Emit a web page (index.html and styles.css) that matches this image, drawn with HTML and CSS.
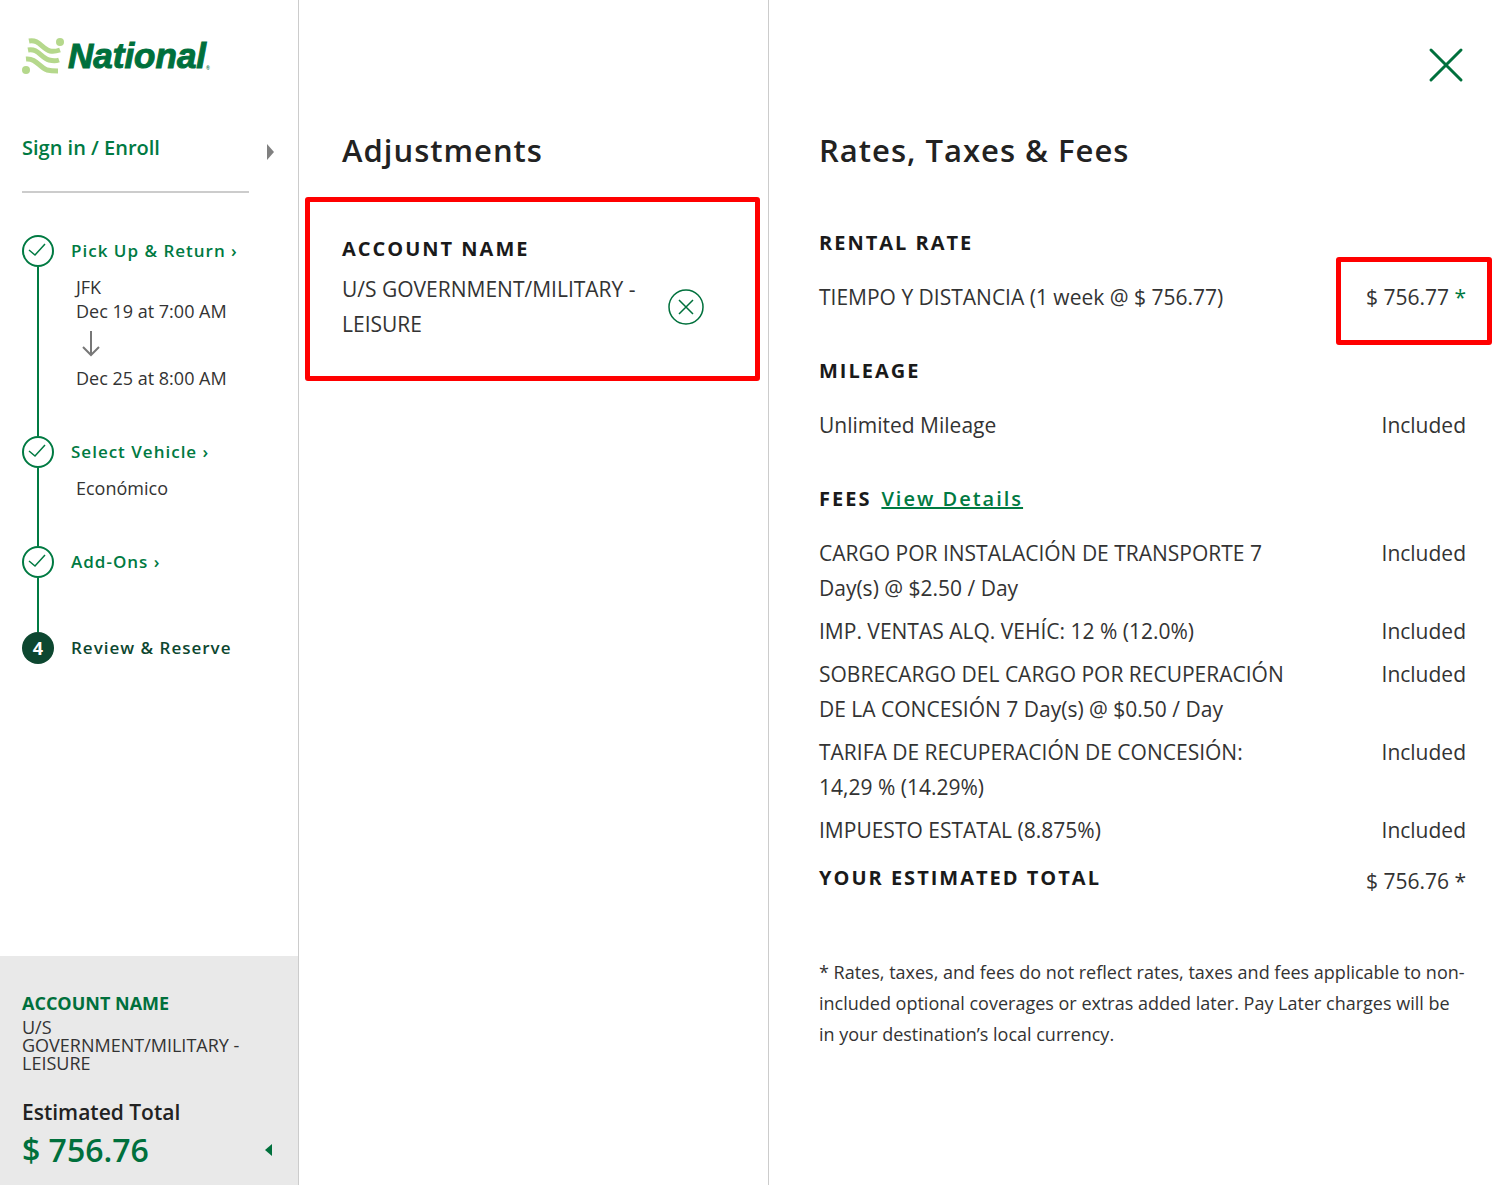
FILE: index.html
```html
<!DOCTYPE html>
<html lang="en">
<head>
    <meta charset="UTF-8">
    <meta name="viewport" content="width=device-width, initial-scale=1.0">
    <title>National - Review &amp; Reserve</title>
    <link rel="stylesheet" href="styles.css">
</head>
<body>
    <div class="layout">
        <aside class="sidebar">
            <a class="logo" href="#" aria-label="National">
                <svg class="logo-mark" viewBox="0 0 42 36" fill="none" stroke="#b5d88c" stroke-width="5">
                    <path d="M7 3C17 1 20 11 28 13C32 14 35 13 38 12"/>
                    <path d="M6 12C16 10 19 20 27 22C31 23 34 23 37 22"/>
                    <path d="M4 21C14 20 17 29 25 32C29 33 32 33 36 33"/>
                    <circle cx="38" cy="4" r="4" fill="#b5d88c" stroke="none"/>
                    <circle cx="4" cy="32" r="4" fill="#b5d88c" stroke="none"/>
                </svg>
                <span class="logo-text">National</span><span class="logo-dot">®</span>
            </a>

            <a class="sign-in" href="#">
                Sign in / Enroll
                <svg width="7" height="16" viewBox="0 0 7 16"><path d="M0 0L7 8L0 16Z" fill="#808080"/></svg>
            </a>
            <hr class="divider">

            <ol class="steps">
                <li class="step">
                    <div class="marker">
                        <svg class="check" viewBox="0 0 32 32"><circle cx="16" cy="16" r="15"/><path d="M7 15L13 20L23 9"/></svg>
                        <span class="line"></span>
                    </div>
                    <div class="step-body">
                        <a class="step-title" href="#">Pick Up &amp; Return ›</a>
                        <div class="details">
                            <p>JFK</p>
                            <p>Dec 19 at 7:00 AM</p>
                            <svg class="arrow" viewBox="0 0 18 26"><path d="M9 0V24M1 16L9 24L17 16"/></svg>
                            <p>Dec 25 at 8:00 AM</p>
                        </div>
                    </div>
                </li>
                <li class="step">
                    <div class="marker">
                        <svg class="check" viewBox="0 0 32 32"><circle cx="16" cy="16" r="15"/><path d="M7 15L13 20L23 9"/></svg>
                        <span class="line"></span>
                    </div>
                    <div class="step-body">
                        <a class="step-title" href="#">Select Vehicle ›</a>
                        <div class="details">
                            <p>Económico</p>
                        </div>
                    </div>
                </li>
                <li class="step">
                    <div class="marker">
                        <svg class="check" viewBox="0 0 32 32"><circle cx="16" cy="16" r="15"/><path d="M7 15L13 20L23 9"/></svg>
                        <span class="line"></span>
                    </div>
                    <div class="step-body">
                        <a class="step-title" href="#">Add-Ons ›</a>
                    </div>
                </li>
                <li class="step current">
                    <div class="marker"><span class="number">4</span></div>
                    <div class="step-body">
                        <span class="step-title">Review &amp; Reserve</span>
                    </div>
                </li>
            </ol>

            <div class="summary">
                <h3 class="summary-title">ACCOUNT NAME</h3>
                <p class="summary-account">U/S GOVERNMENT/MILITARY - LEISURE</p>
                <p class="summary-label">Estimated Total</p>
                <div class="summary-total">
                    <span>$ 756.76</span>
                    <button class="expand" aria-label="Show price details">
                        <svg width="7" height="12" viewBox="0 0 7 12"><path d="M7 0L0 6L7 12Z" fill="#00703c"/></svg>
                    </button>
                </div>
            </div>
        </aside>

        <section class="adjustments">
            <h2>Adjustments</h2>
            <div class="adjustment highlight-wrap">
                <h3>ACCOUNT NAME</h3>
                <div class="adjustment-row">
                    <p>U/S GOVERNMENT/MILITARY - LEISURE</p>
                    <button class="remove" aria-label="Remove account">
                        <svg width="36" height="36" viewBox="0 0 36 36"><circle cx="18" cy="18" r="17"/><path d="M11 11L25 25M25 11L11 25"/></svg>
                    </button>
                </div>
                <span class="highlight highlight-account"></span>
            </div>
        </section>

        <main class="rates">
            <button class="close" aria-label="Close">
                <svg width="40" height="40" viewBox="0 0 40 40"><path d="M5 5L35 35M35 5L5 35"/></svg>
            </button>
            <h2>Rates, Taxes &amp; Fees</h2>

            <h3>RENTAL RATE</h3>
            <table>
                <tr>
                    <td>TIEMPO Y DISTANCIA (1 week @ $ 756.77)</td>
                    <td class="amount"><span class="highlight-wrap">$ 756.77 <a href="#">*</a><span class="highlight highlight-rate"></span></span></td>
                </tr>
            </table>

            <h3>MILEAGE</h3>
            <table>
                <tr>
                    <td>Unlimited Mileage</td>
                    <td class="amount">Included</td>
                </tr>
            </table>

            <div class="fees-head">
                <h3>FEES</h3>
                <a href="#">View Details</a>
            </div>
            <table class="fees">
                <tr>
                    <td>CARGO POR INSTALACIÓN DE TRANSPORTE 7 Day(s) @ $2.50 / Day</td>
                    <td class="amount">Included</td>
                </tr>
                <tr>
                    <td>IMP. VENTAS ALQ. VEHÍC: 12 % (12.0%)</td>
                    <td class="amount">Included</td>
                </tr>
                <tr>
                    <td>SOBRECARGO DEL CARGO POR RECUPERACIÓN DE LA CONCESIÓN 7 Day(s) @ $0.50 / Day</td>
                    <td class="amount">Included</td>
                </tr>
                <tr>
                    <td>TARIFA DE RECUPERACIÓN DE CONCESIÓN: 14,29 % (14.29%)</td>
                    <td class="amount">Included</td>
                </tr>
                <tr>
                    <td>IMPUESTO ESTATAL (8.875%)</td>
                    <td class="amount">Included</td>
                </tr>
            </table>

            <div class="total">
                <h3>YOUR ESTIMATED TOTAL</h3>
                <span>$ 756.76 *</span>
            </div>

            <p class="footnote">* Rates, taxes, and fees do not reflect rates, taxes and fees applicable to non-included optional coverages or extras added later. Pay Later charges will be in your destination’s local currency.</p>
        </main>
    </div>
</body>
</html>
```
FILE: styles.css
```css
* {
    box-sizing: border-box;
}
body {
    font-family: 'Open Sans', 'Noto Sans', sans-serif;
    font-size: 21px;
    line-height: 35px;
    margin: 0;
    color: #333;
    background: white;
}
h2, h3, p {
    margin: 0;
}
h2 {
    color: #222;
    font-size: 31px;
    font-weight: 600;
    line-height: 40px;
    letter-spacing: 1px;
    margin-bottom: 55px;
}
h3 {
    color: #1a1a1a;
    font-size: 20px;
    font-weight: 700;
    line-height: 35px;
    letter-spacing: 2px;
}
a {
    color: #007a42;
    text-decoration: none;
}
button {
    display: block;
    padding: 0;
    border: none;
    background: none;
    cursor: pointer;
}
svg {
    display: block;
    flex: none;
}
.layout {
    display: grid;
    grid-template-columns: 299px 470px 1fr;
    min-height: 100vh;
}

/* sidebar */
.sidebar {
    display: flex;
    flex-direction: column;
    padding-top: 38px;
    border-right: 1px solid #ccc;
}
.logo {
    display: flex;
    height: 36px;
    margin: 0 22px 60px;
    color: #00703c;
    font-family: 'Liberation Sans', Arial, sans-serif;
    font-weight: bold;
    font-style: italic;
    line-height: 36px;
}
.logo-mark {
    width: 42px;
    height: 36px;
    margin-right: 4px;
}
.logo-text {
    font-size: 35px;
    -webkit-text-stroke: 1px #00703c;
}
.logo-dot {
    align-self: flex-end;
    font-size: 5px;
    line-height: 12px;
}
.sign-in {
    display: flex;
    justify-content: space-between;
    align-items: center;
    margin: 0 24px 29px 22px;
    font-size: 20px;
    font-weight: 600;
    line-height: 28px;
}
.sign-in svg {
    margin-top: 8px;
}
.divider {
    width: 227px;
    height: 2px;
    margin: 0 22px 42px;
    border: none;
    background: #ccc;
}
.steps {
    list-style: none;
    margin: 0 22px;
    padding: 0;
}
.step {
    display: flex;
    gap: 17px;
}
.marker {
    display: flex;
    flex-direction: column;
    align-items: center;
}
.check {
    width: 32px;
    height: 32px;
    fill: none;
    stroke: #007a42;
    stroke-width: 2;
}
.check path {
    stroke-width: 1.5;
}
.line {
    flex: 1;
    width: 2px;
    background: #007a42;
}
.number {
    width: 32px;
    height: 32px;
    border-radius: 50%;
    background: #0d4730;
    color: white;
    font-size: 18px;
    font-weight: 700;
    line-height: 32px;
    text-align: center;
}
.step-body {
    padding-bottom: 46px;
}
.step-title {
    display: block;
    margin-bottom: 8px;
    font-size: 17px;
    font-weight: 600;
    line-height: 32px;
    letter-spacing: 1px;
    white-space: nowrap;
}
.current .step-title {
    color: #0d4730;
}
.details {
    padding-left: 5px;
    font-size: 18px;
    line-height: 24px;
}
.arrow {
    width: 18px;
    height: 26px;
    margin: 8px 6px 9px;
    fill: none;
    stroke: #777;
    stroke-width: 2;
}
.summary {
    margin-top: auto;
    padding: 35px 26px 15px 22px;
    background: #e9e9e9;
}
.summary-title {
    margin-bottom: 3px;
    color: #00703c;
    font-size: 18px;
    line-height: 24px;
    letter-spacing: 0;
}
.summary-account {
    max-width: 227px;
    margin-bottom: 26px;
    font-size: 18px;
    line-height: 18px;
}
.summary-label {
    margin-bottom: 4px;
    color: #222;
    font-weight: 600;
    line-height: 28px;
}
.summary-total {
    display: flex;
    justify-content: space-between;
    align-items: center;
    color: #00703c;
    font-size: 32px;
    font-weight: 600;
    line-height: 40px;
}

/* adjustments column */
.adjustments {
    padding: 130px 64px 40px 43px;
    border-right: 1px solid #ccc;
}
.adjustments h2 {
    margin-bottom: 61px;
}
.adjustment h3 {
    margin-bottom: 6px;
}
.adjustment-row {
    display: flex;
    justify-content: space-between;
    align-items: center;
    gap: 32px;
}
.remove svg,
.close svg {
    fill: none;
    stroke: #00703c;
    stroke-width: 1.5;
}
.close svg {
    stroke-width: 3;
    stroke-linecap: round;
}

/* red frames over the content */
.highlight-wrap {
    position: relative;
}
.highlight {
    position: absolute;
    border: 5px solid #f00;
    border-radius: 3px;
    pointer-events: none;
}
.highlight-account {
    inset: -34px -56px -39px -37px;
}
.highlight-rate {
    inset: -26px -26px -34px -30px;
}

/* rates column */
.rates {
    padding: 45px 34px 40px 50px;
}
.close {
    margin: 0 0 45px auto;
}
table {
    width: 100%;
    margin: 16px 0 34px;
    border-collapse: collapse;
}
td {
    padding: 4px 0;
    vertical-align: top;
}
.amount {
    width: 180px;
    text-align: right;
    white-space: nowrap;
}
.fees-head {
    display: flex;
    gap: 10px;
}
.fees-head a {
    font-size: 20px;
    font-weight: 600;
    letter-spacing: 2px;
    text-decoration: underline;
}
.fees {
    margin-bottom: 8px;
}
.total {
    display: flex;
    justify-content: space-between;
    margin-bottom: 58px;
}
.total span {
    padding-top: 4px;
}
.footnote {
    font-size: 18px;
    line-height: 31px;
}
```
